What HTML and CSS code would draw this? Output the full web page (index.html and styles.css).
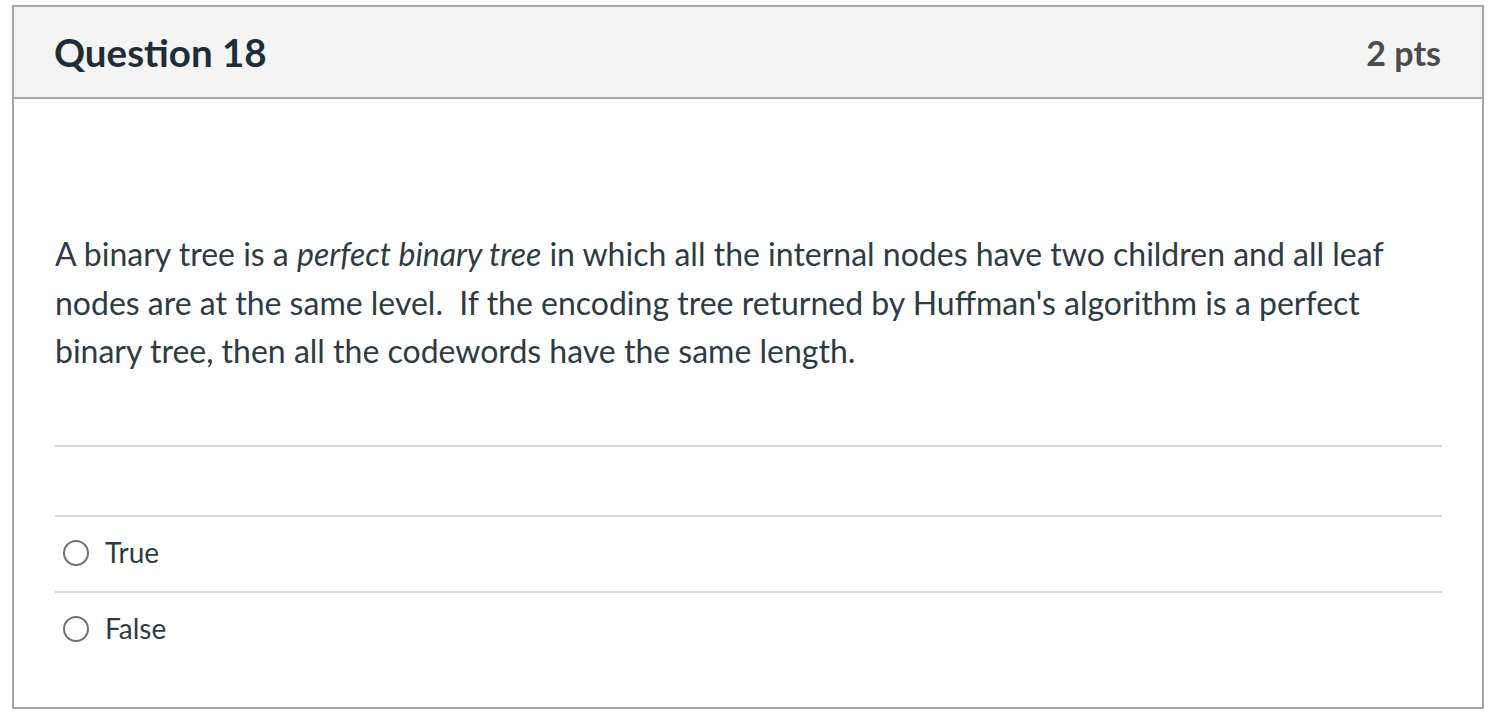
FILE: index.html
```html
<!DOCTYPE html>
<html>
<head>
<meta charset="utf-8">
<link rel="stylesheet" href="styles.css">
</head>
<body>
<div class="question">
  <div class="header">
    <span class="title">Question 18</span>
    <span class="points">2 pts</span>
  </div>
  <div class="content">
    <p class="text">A binary tree is a <em>perfect binary tree</em> in which all the internal nodes have two children and all leaf nodes are at the same level.&nbsp; If the encoding tree returned by Huffman's algorithm is a perfect binary tree, then all the codewords have the same length.</p>
    <div class="sep"></div>
    <div class="blank"></div>
    <div class="answer">
      <span class="radio"></span><span class="label">True</span>
    </div>
    <div class="answer">
      <span class="radio"></span><span class="label">False</span>
    </div>
  </div>
</div>
</body>
</html>
```
FILE: styles.css
```css
html, body {
  margin: 0;
  padding: 0;
  background: #ffffff;
}
body {
  font-family: Lato, "Open Sans", sans-serif;
  color: #2d3b45;
}
.question {
  margin: 5px 0 0 12px;
  width: 1468px;
  height: 700px;
  border: 2px solid #a5a5a5;
  display: flex;
  flex-direction: column;
}
.header {
  height: 90px;
  background: #f4f4f4;
  border-bottom: 2px solid #a5a5a5;
  display: flex;
  align-items: center;
  justify-content: space-between;
  padding: 0 41px 0 40px;
}
.title {
  font-size: 38.5px;
  font-weight: 700;
  color: #1f2d38;
}
.points {
  font-size: 34px;
  font-weight: 700;
  color: #4b4b4b;
}
.content {
  padding: 0 40px 0 41px;
}
.text {
  margin: 131px 0 0 0;
  font-size: 32px;
  line-height: 48.5px;
  color: #2d3b45;
}
.sep {
  margin-top: 69px;
  height: 2px;
  background: #d7d7d7;
}
.blank {
  height: 68px;
  border-bottom: 2px solid #d7d7d7;
}
.answer {
  height: 71px;
  padding-bottom: 3px;
  display: flex;
  align-items: center;
  padding-left: 8px;
}
.answer + .answer {
  border-top: 2px solid #d7d7d7;
}
.radio {
  width: 22px;
  height: 22px;
  border: 2px solid #707070;
  border-radius: 50%;
  flex: none;
  margin-top: 2px;
}
.label {
  margin-left: 16px;
  font-size: 28px;
  color: #2d3b45;
}
```
